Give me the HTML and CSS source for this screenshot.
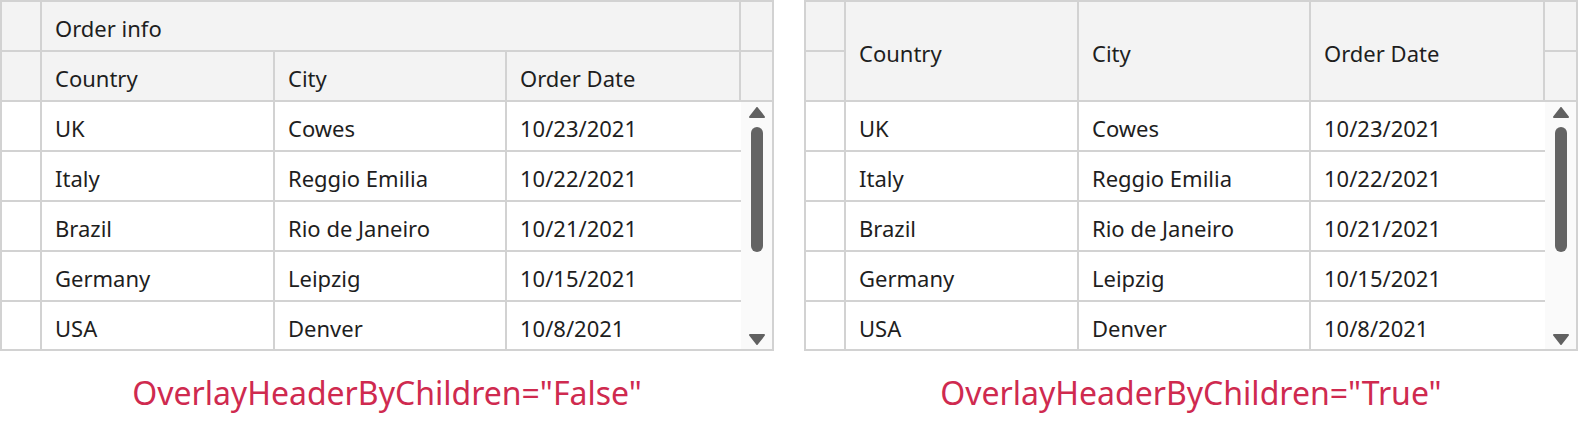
FILE: index.html
```html
<html>
<head>
    <title>Column bands</title>
    <link rel="stylesheet" href="styles.css">
</head>
<body>
    <div class="page">
        <div class="panel">
            <div class="grid">
                <div class="head">
                    <div class="cell"></div>
                    <div class="cell band">Order info</div>
                    <div class="cell scroll-head"></div>
                    <div class="cell"></div>
                    <div class="cell">Country</div>
                    <div class="cell">City</div>
                    <div class="cell">Order Date</div>
                    <div class="cell scroll-head"></div>
                </div>
                <div class="body">
                    <div class="rows">
                        <div class="row"><div></div><div>UK</div><div>Cowes</div><div>10/23/2021</div></div>
                        <div class="row"><div></div><div>Italy</div><div>Reggio Emilia</div><div>10/22/2021</div></div>
                        <div class="row"><div></div><div>Brazil</div><div>Rio de Janeiro</div><div>10/21/2021</div></div>
                        <div class="row"><div></div><div>Germany</div><div>Leipzig</div><div>10/15/2021</div></div>
                        <div class="row"><div></div><div>USA</div><div>Denver</div><div>10/8/2021</div></div>
                    </div>
                    <div class="scrollbar">
                        <svg class="arrow" width="16" height="11" viewBox="0 0 16 11"><polygon points="8,1 15,10 1,10" /></svg>
                        <div class="thumb"></div>
                        <svg class="arrow arrow-down" width="16" height="11" viewBox="0 0 16 11"><polygon points="1,1 15,1 8,10" /></svg>
                    </div>
                </div>
            </div>
            <div class="caption">OverlayHeaderByChildren="False"</div>
        </div>

        <div class="panel">
            <div class="grid">
                <div class="head">
                    <div class="cell"></div>
                    <div class="cell tall">Country</div>
                    <div class="cell tall">City</div>
                    <div class="cell tall">Order Date</div>
                    <div class="cell scroll-head"></div>
                    <div class="cell"></div>
                    <div class="cell scroll-head"></div>
                </div>
                <div class="body">
                    <div class="rows">
                        <div class="row"><div></div><div>UK</div><div>Cowes</div><div>10/23/2021</div></div>
                        <div class="row"><div></div><div>Italy</div><div>Reggio Emilia</div><div>10/22/2021</div></div>
                        <div class="row"><div></div><div>Brazil</div><div>Rio de Janeiro</div><div>10/21/2021</div></div>
                        <div class="row"><div></div><div>Germany</div><div>Leipzig</div><div>10/15/2021</div></div>
                        <div class="row"><div></div><div>USA</div><div>Denver</div><div>10/8/2021</div></div>
                    </div>
                    <div class="scrollbar">
                        <svg class="arrow" width="16" height="11" viewBox="0 0 16 11"><polygon points="8,1 15,10 1,10" /></svg>
                        <div class="thumb"></div>
                        <svg class="arrow arrow-down" width="16" height="11" viewBox="0 0 16 11"><polygon points="1,1 15,1 8,10" /></svg>
                    </div>
                </div>
            </div>
            <div class="caption">OverlayHeaderByChildren="True"</div>
        </div>
    </div>
</body>
</html>
```

FILE: styles.css
```css
body {
    margin: 0;
    background-color: #fff;
    font-family: "Noto Sans", sans-serif;
    color: #1e1e1e;
}
.page {
    display: flex;
    gap: 30px;
}
.panel {
    width: 774px;
    display: flex;
    flex-direction: column;
    align-items: center;
}
.grid {
    width: 774px;
    height: 351px;
    box-sizing: border-box;
    border: 2px solid #d2d2d2;
    display: flex;
    flex-direction: column;
    font-size: 22px;
}
.head {
    display: grid;
    grid-template-columns: 40px 233px 232px 234px 31px;
    grid-template-rows: 50px 50px;
    background-color: #f3f3f3;
}
.cell {
    display: flex;
    align-items: center;
    padding: 3px 0 0 13px;
    border-right: 2px solid #d2d2d2;
    border-bottom: 2px solid #d2d2d2;
    box-sizing: border-box;
}
.cell.scroll-head {
    border-right: 0;
}
.band {
    grid-column: 2 / 5;
}
.tall {
    grid-row: span 2;
}
.body {
    display: flex;
    height: 247px;
    overflow: hidden;
}
.rows {
    width: 739px;
}
.row {
    display: grid;
    grid-template-columns: 40px 233px 232px 234px;
    height: 50px;
    box-sizing: border-box;
    border-bottom: 2px solid #d2d2d2;
}
.row > div {
    display: flex;
    align-items: center;
    padding: 3px 0 0 13px;
    border-right: 2px solid #d2d2d2;
}
.row > div:last-child {
    border-right: 0;
}
.scrollbar {
    width: 31px;
    box-sizing: border-box;
    padding: 5px 0 4px;
    background-color: #fafafa;
    display: flex;
    flex-direction: column;
    align-items: center;
}
.arrow {
    display: block;
    fill: #616161;
    stroke: #616161;
    stroke-width: 2;
    stroke-linejoin: round;
}
.arrow-down {
    margin-top: auto;
}
.thumb {
    width: 12px;
    height: 125px;
    margin-top: 9px;
    border-radius: 6px;
    background-color: #646464;
}
.caption {
    margin-top: 22px;
    font-size: 32px;
    line-height: 40px;
    color: #cf2a4f;
}
```
